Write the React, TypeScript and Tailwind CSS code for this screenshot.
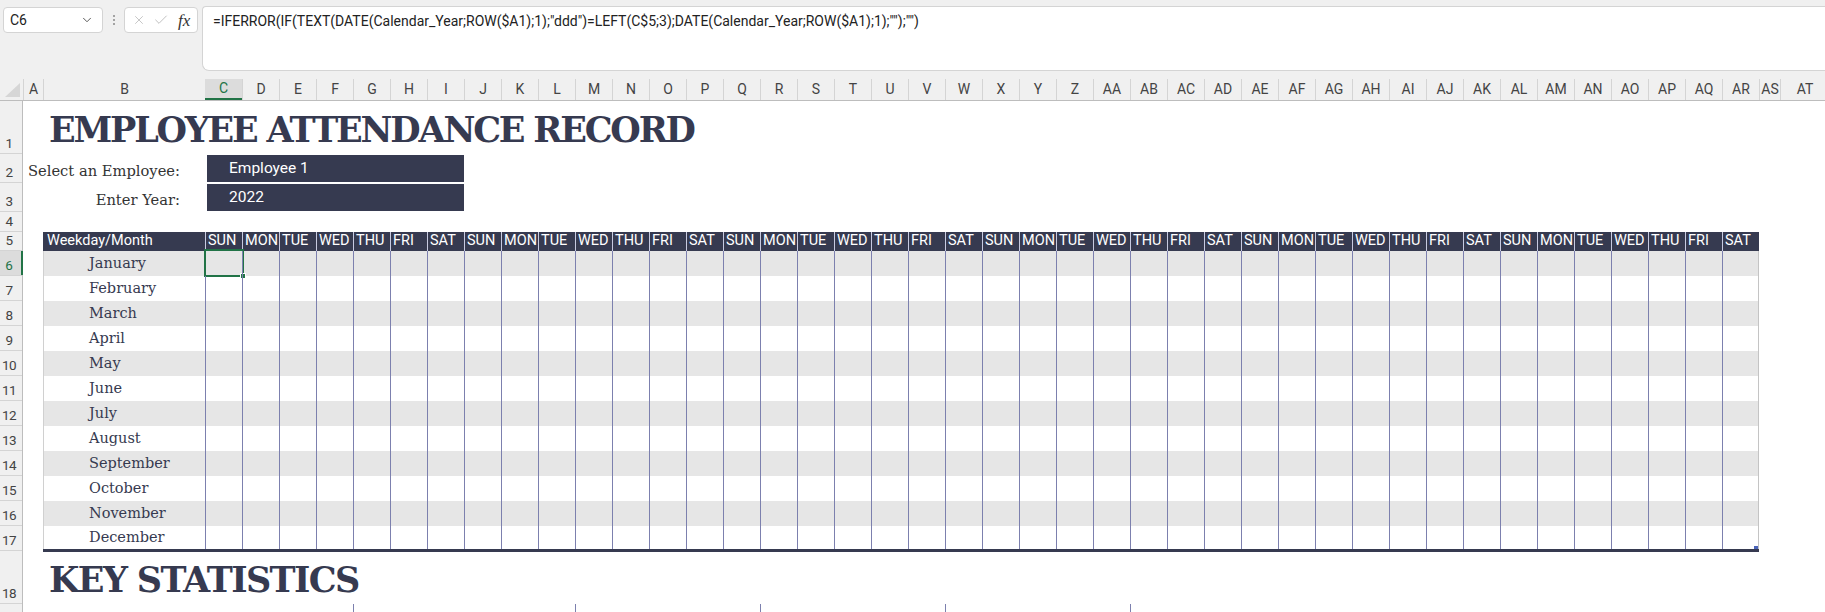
import { ChevronDown, X, Check } from "lucide-react";

const DAYS = ["SUN", "MON", "TUE", "WED", "THU", "FRI", "SAT"];
const MONTHS = [
  "January",
  "February",
  "March",
  "April",
  "May",
  "June",
  "July",
  "August",
  "September",
  "October",
  "November",
  "December",
];
const FORMULA =
  '=IFERROR(IF(TEXT(DATE(Calendar_Year;ROW($A1);1);"ddd")=LEFT(C$5;3);DATE(Calendar_Year;ROW($A1);1);"");"")';

// column letters C .. AR
const colName = (n: number) => {
  let s = "";
  n += 1;
  while (n > 0) {
    const m = (n - 1) % 26;
    s = String.fromCharCode(65 + m) + s;
    n = Math.floor((n - 1) / 26);
  }
  return s;
};
const DAY_COLS = Array.from({ length: 42 }, (_, i) => colName(i + 2));
const ROW_HEIGHTS = [53, 29, 29, 20, 19, 25, 25, 25, 25, 25, 25, 25, 25, 25, 25, 25, 25, 53, 40];
const STAT_LINES = [4, 10, 15, 20, 25];

const TopBar = () => (
  <div className="h-[79px] bg-[#f0f0f0] flex items-start pt-[6px] pl-[3px]">
    <div className="mt-[1px] w-[100px] h-[26px] bg-white border border-[#d4d4d4] rounded-[4px] flex items-center justify-between pl-[6px] pr-[8px] text-[14px] text-[#222]">
      <span>C6</span>
      <ChevronDown size={14} strokeWidth={1.5} className="text-[#444]" />
    </div>
    <div className="w-[21px] h-[27px] flex flex-col items-center justify-center gap-[2px]">
      <span className="w-[2px] h-[2px] bg-[#8a8a8a] rounded-full" />
      <span className="w-[2px] h-[2px] bg-[#8a8a8a] rounded-full" />
      <span className="w-[2px] h-[2px] bg-[#8a8a8a] rounded-full" />
    </div>
    <div className="mt-[1px] w-[74px] h-[26px] bg-white border border-[#d4d4d4] rounded-[4px] flex items-center pl-[7px] gap-[7px]">
      <X size={14} strokeWidth={1.1} className="text-[#a8a8a8]" />
      <Check size={16} strokeWidth={1.1} className="text-[#a8a8a8]" />
      <span className="ml-[2px] font-['Liberation_Serif',serif] italic text-[17px] text-[#333] leading-none">fx</span>
    </div>
    <div className="ml-[4px] flex-1 h-[65px] bg-white border border-[#d4d4d4] border-r-0 rounded-bl-[7px] rounded-tl-[4px] pl-[10px] pt-[4px] text-[14px] text-[#222] whitespace-nowrap">
      {FORMULA}
    </div>
  </div>
);

const ColumnHeaders = () => (
  <div className="h-[22px] flex bg-[#f0f0f0] border-b border-[#bdbdbd] text-[14px] text-[#444]">
    <div className="w-[23px] flex items-end justify-end pb-[3px] pr-[3px]">
      <svg width="15" height="14" viewBox="0 0 15 14">
        <polygon points="15,0 15,14 0,14" fill="#d6d6d6" />
      </svg>
    </div>
    <div className="w-[20px] flex items-center justify-center border-l border-[#d4d4d4]">A</div>
    <div className="w-[162px] flex items-center justify-center border-l border-[#d4d4d4]">B</div>
    {DAY_COLS.map((c, i) =>
      i === 0 ? (
        <div
          key={c}
          className="w-[37px] flex items-center justify-center bg-[#dcdcdc] text-[#217346] border-b-2 border-[#217346]"
        >
          {c}
        </div>
      ) : (
        <div key={c} className="w-[37px] flex items-center justify-center border-l border-[#d4d4d4]">
          {c}
        </div>
      )
    )}
    <div className="w-[21px] flex items-center justify-center border-l border-[#d4d4d4]">AS</div>
    <div className="flex-1 flex items-center justify-center border-l border-[#d4d4d4] pl-[4px]">AT</div>
  </div>
);

const RowHeaders = () => (
  <div className="w-[23px] shrink-0 bg-[#f0f0f0] border-r border-[#bdbdbd] text-[13.5px] text-[#444]">
    {ROW_HEIGHTS.map((h, i) =>
      i === 5 ? (
        <div
          key={i}
          style={{ height: h }}
          className="relative flex items-end justify-center pr-[4px] pb-[2px] leading-[16px] bg-[#dcdcdc] text-[#217346] border-b border-[#d4d4d4]"
        >
          {i + 1}
          <span className="absolute right-[-1px] top-0 bottom-0 w-[2px] bg-[#217346]" />
        </div>
      ) : (
        <div
          key={i}
          style={{ height: h }}
          className="flex items-end justify-center pr-[4px] pb-[2px] leading-[16px] border-b border-[#d4d4d4] tracking-[-0.5px]"
        >
          {i + 1}
        </div>
      )
    )}
  </div>
);

const InputBox = ({ value }: { value: string }) => (
  <div className="ml-[2px] mt-[1px] w-[257px] h-[27px] bg-[#363a50] flex items-center pl-[22px] text-[15.5px] text-white">
    {value}
  </div>
);

const Sheet = () => (
  <div className="flex-1 text-[#363a50]">
    {/* row 1 */}
    <div className="h-[53px] flex items-end pl-[26px] pb-[7px]">
      <h1 className="font-['DejaVu_Serif',serif] font-bold text-[35px] tracking-[-2.2px] leading-none whitespace-nowrap">
        EMPLOYEE ATTENDANCE RECORD
      </h1>
    </div>
    {/* rows 2-3 */}
    <div className="h-[29px] flex">
      <div className="w-[182px] flex items-end justify-end pr-[25px] pb-[4px] font-['DejaVu_Serif',serif] text-[14.7px] leading-none text-[#333]">
        Select an Employee:
      </div>
      <InputBox value="Employee 1" />
    </div>
    <div className="h-[29px] flex">
      <div className="w-[182px] flex items-end justify-end pr-[25px] pb-[4px] font-['DejaVu_Serif',serif] text-[14.7px] leading-none text-[#333]">
        Enter Year:
      </div>
      <InputBox value="2022" />
    </div>
    <div className="h-[20px]" />
    {/* row 5 header */}
    <div className="h-[19px] flex">
      <div className="w-[20px]" />
      <div className="flex bg-[#363a50] text-white text-[14.5px] leading-none">
        <div className="w-[162px] flex items-center pl-[4px]">Weekday/Month</div>
        {DAY_COLS.map((c, i) => (
          <div key={c} className="w-[37px] flex items-center pl-[2px] border-l border-[#c7cae0] whitespace-nowrap overflow-hidden">
            {DAYS[i % 7]}
          </div>
        ))}
      </div>
    </div>
    {/* months */}
    {MONTHS.map((m, r) => (
      <div key={m} className={r === 11 ? "h-[23px] flex" : "h-[25px] flex"}>
        <div className="w-[20px]" />
        <div className={r % 2 === 0 ? "flex bg-[#e6e6e6]" : "flex bg-white"}>
          <div className="w-[162px] flex items-center pl-[45px] border-l border-[#d0d0d0] font-['DejaVu_Serif',serif] text-[14.5px]">
            {m}
          </div>
          {DAY_COLS.map((c, i) => (
            <div
              key={c}
              className={
                i === 41
                  ? "relative w-[37px] border-l border-r border-l-[#7c80ae] border-r-[#c4c4c4]"
                  : "relative w-[37px] border-l border-[#7c80ae]"
              }
            >
              {r === 0 && i === 0 && (
                <div className="absolute -left-[2px] -top-[2px] w-[40px] h-[28px] border-2 border-[#217346]">
                  <span className="absolute -right-[4px] -bottom-[4px] w-[6px] h-[6px] bg-[#217346] border border-white" />
                </div>
              )}
              {r === 11 && i === 41 && (
                <span className="absolute right-0 bottom-0 w-[4px] h-[3px] bg-[#4a63b8]" />
              )}
            </div>
          ))}
        </div>
      </div>
    ))}
    <div className="ml-[20px] w-[1716px] h-[3px] bg-[#363a50]" />
    {/* row 18 */}
    <div className="h-[52px] flex items-end pl-[26px] pb-[7px]">
      <h2 className="font-['DejaVu_Serif',serif] font-bold text-[35px] tracking-[-1.6px] leading-none whitespace-nowrap">
        KEY STATISTICS
      </h2>
    </div>
    {/* row 19 */}
    <div className="h-[40px] flex">
      <div className="w-[182px]" />
      {DAY_COLS.map((c, i) => (
        <div
          key={c}
          className={STAT_LINES.includes(i) ? "w-[37px] border-l border-[#7c80ae]" : "w-[37px]"}
        />
      ))}
    </div>
  </div>
);

export default function App() {
  return (
    <div className="w-[1825px] h-[612px] overflow-hidden bg-white font-['Roboto',sans-serif]">
      <TopBar />
      <ColumnHeaders />
      <div className="flex">
        <RowHeaders />
        <Sheet />
      </div>
    </div>
  );
}
